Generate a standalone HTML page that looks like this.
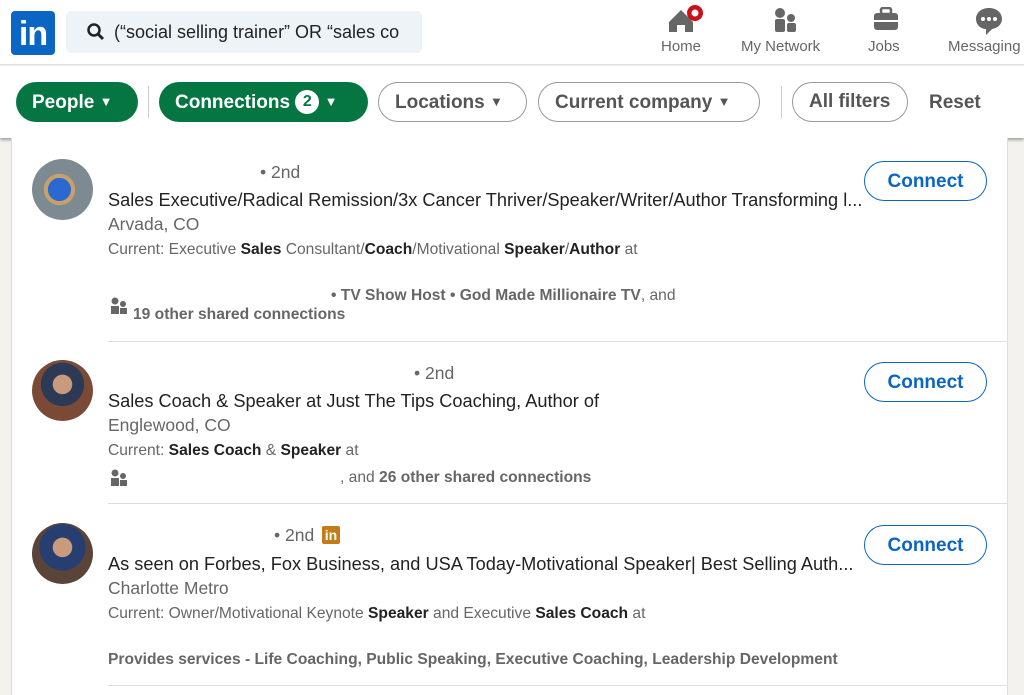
<!DOCTYPE html>
<html><head><meta charset="utf-8"><style>
*{margin:0;padding:0;box-sizing:border-box}
body{width:1024px;height:695px;overflow:hidden;background:#f3f2ef;font-family:"Liberation Sans",Arial,sans-serif;position:relative}
.a{position:absolute;white-space:nowrap}
.top{position:absolute;left:0;top:0;width:1024px;height:65px;background:#fff;border-bottom:1px solid #e0e0e0}
.fb{position:absolute;left:0;top:66px;width:1024px;height:72px;background:#fff;box-shadow:0 2px 3px rgba(0,0,0,.35)}
.pill{position:absolute;top:82px;height:40px;border-radius:20px;font-size:19px;font-weight:bold;line-height:40px;padding:0 16px}
.g{background:#057642;color:#fff}
.o{border:1px solid #999;color:#555;background:#fff;line-height:38px}
.card{position:absolute;left:11px;top:138px;width:997px;height:557px;background:#fff;border-left:1px solid #ddd;border-right:1px solid #ddd}
.sep{position:absolute;left:108px;width:899px;height:1px;background:#ddd}
.t{font-size:18.2px;color:#222}
.l{font-size:17.5px;color:#666}
.c{font-size:15.6px;color:#666}
.c b{color:#222}
.s{font-size:15.6px;color:#666;font-weight:bold}
.btn{position:absolute;left:864px;width:123px;height:40px;border:1.5px solid #0a66c2;border-radius:20px;color:#0a66c2;font-weight:bold;font-size:19px;text-align:center;line-height:39px}
.av{position:absolute;left:32px;width:61px;height:61px;border-radius:50%}
.nav{position:absolute;top:38px;font-size:15px;color:#666}
</style></head><body>
<div class="top"></div>
<div class="a" style="left:11px;top:11px;width:44px;height:44px;background:#0a66c2;border-radius:4px;color:#fff;font-weight:bold;font-size:34px;line-height:46px;text-align:center;letter-spacing:-1px">in</div>
<div class="a" style="left:66px;top:11px;width:356px;height:42px;background:#eef3f8;border-radius:5px"></div>
<svg class="a" style="left:86px;top:22px" width="20" height="20" viewBox="0 0 20 20"><circle cx="8" cy="8" r="5.5" fill="none" stroke="#222" stroke-width="2.5"/><path d="M12 12l5 5" stroke="#222" stroke-width="3"/></svg>
<div class="a" style="left:114px;top:22px;font-size:18px;color:#222">(“social selling trainer” OR “sales co</div>
<svg class="a" style="left:667px;top:4px" width="40" height="30"><path d="M2 18L14 6l12 12v10h-8v-7h-8v7H2z" fill="#666"/><circle cx="28" cy="9" r="8" fill="#cc1016"/><circle cx="28" cy="9" r="3.5" fill="#fff"/></svg>
<div class="nav" style="left:661px">Home</div>
<svg class="a" style="left:772px;top:7px" width="26" height="26"><circle cx="8" cy="6" r="5" fill="#666"/><rect x="3" y="12" width="10" height="13" rx="2" fill="#666"/><circle cx="19" cy="11" r="4" fill="#666"/><rect x="15" y="16" width="9" height="9" rx="2" fill="#666"/></svg>
<div class="nav" style="left:741px">My Network</div>
<svg class="a" style="left:873px;top:7px" width="26" height="24"><rect x="8" y="1" width="10" height="6" rx="2" fill="none" stroke="#666" stroke-width="2.5"/><rect x="1" y="6" width="24" height="17" rx="3" fill="#666"/><rect x="1" y="13" width="24" height="2" fill="#fff"/></svg>
<div class="nav" style="left:868px">Jobs</div>
<svg class="a" style="left:975px;top:7px" width="28" height="28"><path d="M14 1C6 1 1 6 1 12c0 6 5 10 10 10v6l6-6c6-1 10-5 10-10C27 6 22 1 14 1z" fill="#666"/><circle cx="8" cy="12" r="2" fill="#fff"/><circle cx="14" cy="12" r="2" fill="#fff"/><circle cx="20" cy="12" r="2" fill="#fff"/></svg>
<div class="nav" style="left:948px">Messaging</div>

<div class="fb"></div>
<div class="pill g" style="left:16px;width:122px">People <span style="font-size:13px;vertical-align:2px">▼</span></div>
<div class="a" style="left:148px;top:86px;width:1px;height:32px;background:#ccc"></div>
<div class="pill g" style="left:159px;width:209px">Connections <span style="display:inline-block;width:24px;height:24px;border-radius:50%;background:#fff;color:#057642;text-align:center;line-height:24px;font-size:16px;vertical-align:2px">2</span> <span style="font-size:13px;vertical-align:2px">▼</span></div>
<div class="pill o" style="left:378px;width:149px">Locations <span style="font-size:13px;vertical-align:2px">▼</span></div>
<div class="pill o" style="left:538px;width:222px">Current company <span style="font-size:13px;vertical-align:2px">▼</span></div>
<div class="a" style="left:781px;top:86px;width:1px;height:32px;background:#ccc"></div>
<div class="pill o" style="left:792px;width:116px">All filters</div>
<div class="a" style="left:929px;top:92px;font-size:19px;font-weight:bold;color:#555">Reset</div>

<div class="card"></div>
<div class="sep" style="top:341px"></div>
<div class="sep" style="top:503px"></div>
<div class="sep" style="top:685px"></div>

<div class="av" style="top:159px;background:radial-gradient(circle at 45% 50%,#2a6ad0 0 25%,#c9a06a 26% 34%,#7e8a92 35%)"></div>
<div class="a l" style="left:260px;top:162px">• 2nd</div>
<div class="a t" style="left:108px;top:190px">Sales Executive/Radical Remission/3x Cancer Thriver/Speaker/Writer/Author Transforming l...</div>
<div class="a l" style="left:108px;top:214px">Arvada, CO</div>
<div class="a c" style="left:108px;top:241px">Current: Executive <b>Sales</b> Consultant/<b>Coach</b>/Motivational <b>Speaker</b>/<b>Author</b> at</div>
<svg class="a" style="left:110px;top:297px" width="18" height="18"><circle cx="5" cy="4" r="3.5" fill="#666"/><rect x="1" y="9" width="8" height="8" fill="#666"/><circle cx="13" cy="7" r="3" fill="#666"/><rect x="10" y="11" width="7" height="6" fill="#666"/></svg>
<div class="a s" style="left:331px;top:287px">• TV Show Host • God Made Millionaire TV<span style="font-weight:normal">, and</span></div>
<div class="a s" style="left:133px;top:306px">19 other shared connections</div>
<div class="btn" style="top:161px">Connect</div>

<div class="av" style="top:360px;background:radial-gradient(circle at 50% 40%,#c99a7c 0 20%,#2c3a55 21% 45%,#7a4a36 46%)"></div>
<div class="a l" style="left:414px;top:363px">• 2nd</div>
<div class="a t" style="left:108px;top:391px">Sales Coach &amp; Speaker at Just The Tips Coaching, Author of</div>
<div class="a l" style="left:108px;top:415px">Englewood, CO</div>
<div class="a c" style="left:108px;top:442px">Current: <b>Sales Coach</b> &amp; <b>Speaker</b> at</div>
<svg class="a" style="left:110px;top:469px" width="18" height="18"><circle cx="5" cy="4" r="3.5" fill="#666"/><rect x="1" y="9" width="8" height="8" fill="#666"/><circle cx="13" cy="7" r="3" fill="#666"/><rect x="10" y="11" width="7" height="6" fill="#666"/></svg>
<div class="a s" style="left:340px;top:469px"><span style="font-weight:normal">, and</span> 26 other shared connections</div>
<div class="btn" style="top:362px">Connect</div>

<div class="av" style="top:523px;background:radial-gradient(circle at 50% 40%,#c99a7c 0 20%,#273e70 21% 48%,#5a4438 49%)"></div>
<div class="a l" style="left:274px;top:525px">• 2nd</div>
<div class="a" style="left:322px;top:526px;width:18px;height:18px;background:#c37d16;border-radius:2px;color:#fff;font-weight:bold;font-size:14px;line-height:19px;text-align:center">in</div>
<div class="a t" style="left:108px;top:554px">As seen on Forbes, Fox Business, and USA Today-Motivational Speaker| Best Selling Auth...</div>
<div class="a l" style="left:108px;top:578px">Charlotte Metro</div>
<div class="a c" style="left:108px;top:605px">Current: Owner/Motivational Keynote <b>Speaker</b> and Executive <b>Sales Coach</b> at</div>
<div class="a s" style="left:108px;top:651px">Provides services - Life Coaching, Public Speaking, Executive Coaching, Leadership Development</div>
<div class="btn" style="top:525px">Connect</div>
</body></html>
